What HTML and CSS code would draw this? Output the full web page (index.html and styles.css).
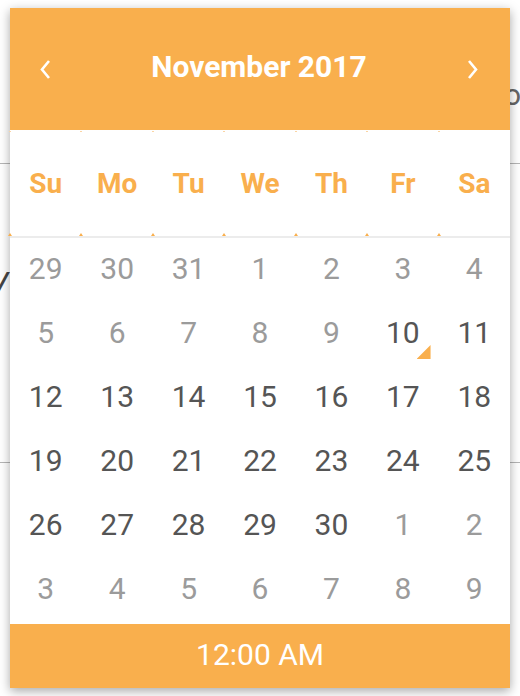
FILE: index.html
```html
<!DOCTYPE html>
<html lang="en">
<head>
    <meta charset="UTF-8">
    <title>Date Picker</title>
    <link rel="stylesheet" href="styles.css">
</head>
<body>
    <div class="page">
        <div class="page-label">Stop</div>
        <div class="page-line line-top"></div>
        <div class="page-input">/</div>
        <div class="page-line line-bottom"></div>
    </div>

    <div class="picker">
        <div class="picker-header">
            <button class="nav-btn" aria-label="Previous month">
                <svg width="14" height="20" viewBox="0 0 14 20"><polyline points="10,2 3,10.5 10,19" fill="none" stroke="#fff" stroke-width="2.6"/></svg>
            </button>
            <div class="picker-title">November 2017</div>
            <button class="nav-btn" aria-label="Next month">
                <svg width="14" height="20" viewBox="0 0 14 20"><polyline points="4,2 11,10.5 4,19" fill="none" stroke="#fff" stroke-width="2.6"/></svg>
            </button>
        </div>

        <div class="weekdays">
            <div class="weekday">Su</div>
            <div class="weekday">Mo</div>
            <div class="weekday">Tu</div>
            <div class="weekday">We</div>
            <div class="weekday">Th</div>
            <div class="weekday">Fr</div>
            <div class="weekday">Sa</div>
        </div>

        <div class="days">
            <div class="day muted">29</div>
            <div class="day muted">30</div>
            <div class="day muted">31</div>
            <div class="day muted">1</div>
            <div class="day muted">2</div>
            <div class="day muted">3</div>
            <div class="day muted">4</div>

            <div class="day muted">5</div>
            <div class="day muted">6</div>
            <div class="day muted">7</div>
            <div class="day muted">8</div>
            <div class="day muted">9</div>
            <div class="day today">10</div>
            <div class="day">11</div>

            <div class="day">12</div>
            <div class="day">13</div>
            <div class="day">14</div>
            <div class="day">15</div>
            <div class="day">16</div>
            <div class="day">17</div>
            <div class="day">18</div>

            <div class="day">19</div>
            <div class="day">20</div>
            <div class="day">21</div>
            <div class="day">22</div>
            <div class="day">23</div>
            <div class="day">24</div>
            <div class="day">25</div>

            <div class="day">26</div>
            <div class="day">27</div>
            <div class="day">28</div>
            <div class="day">29</div>
            <div class="day">30</div>
            <div class="day muted">1</div>
            <div class="day muted">2</div>

            <div class="day muted">3</div>
            <div class="day muted">4</div>
            <div class="day muted">5</div>
            <div class="day muted">6</div>
            <div class="day muted">7</div>
            <div class="day muted">8</div>
            <div class="day muted">9</div>
        </div>

        <div class="picker-footer">12:00 AM</div>
    </div>
</body>
</html>
```

FILE: styles.css
```css
html, body {
    margin: 0;
    height: 100%;
    background: #fff;
    font-family: Roboto, "Liberation Sans", sans-serif;
}

/* page underneath the popup */
.page {
    height: 100%;
    overflow: hidden;
}
.page-label {
    padding-top: 80px;
    text-align: right;
    margin-right: -18px;
    font-size: 30px;
    line-height: 30px;
    color: #666;
}
.page-line {
    height: 1px;
    background: #b5b5b5;
}
.line-top {
    margin-top: 53px;
}
.page-input {
    margin-top: 104px;
    margin-left: -8px;
    font-size: 40px;
    line-height: 40px;
    font-style: italic;
    color: #444;
}
.line-bottom {
    margin-top: 154px;
}

/* date picker popup */
.picker {
    position: absolute;
    left: 10px;
    top: 8px;
    width: 500px;
    background: #fff;
    box-shadow: 0 3px 10px rgba(0, 0, 0, 0.35);
}
.picker-header {
    height: 122px;
    background: #f9af4d;
    display: flex;
    align-items: center;
    justify-content: space-between;
    padding: 0 26px 0 24px;
    box-sizing: border-box;
}
.picker-title {
    color: #fff;
    font-weight: bold;
    font-size: 30px;
    line-height: 30px;
    margin-top: -4px;
}
.nav-btn {
    background: none;
    border: 0;
    padding: 0;
    width: 24px;
    height: 24px;
    display: flex;
    align-items: center;
    justify-content: center;
    cursor: pointer;
}

.weekdays {
    display: grid;
    grid-template-columns: repeat(7, 1fr);
    border-bottom: 2px solid #ececec;
}
.weekday {
    position: relative;
    height: 106px;
    display: flex;
    align-items: center;
    justify-content: center;
    color: #f9af4d;
    font-weight: bold;
    font-size: 28px;
}
/* little tick marks between the weekday columns */
.weekday::before {
    content: "";
    position: absolute;
    left: -2px;
    bottom: 0;
    border-left: 2px solid transparent;
    border-right: 2px solid transparent;
    border-bottom: 3px solid #f9af4d;
}
.weekday::after {
    content: "";
    position: absolute;
    left: -1px;
    top: 1px;
    width: 2px;
    height: 1px;
    background: #fbd5a4;
}

.days {
    display: grid;
    grid-template-columns: repeat(7, 1fr);
    grid-auto-rows: 64px;
    padding-bottom: 2px;
}
.day {
    position: relative;
    display: flex;
    align-items: center;
    justify-content: center;
    padding-bottom: 3px;
    font-size: 30px;
    color: #555;
}
.day.muted {
    color: #9b9b9b;
}
.day.today::after {
    content: "";
    position: absolute;
    right: 8px;
    bottom: 7px;
    width: 14px;
    height: 14px;
    background: #f9af4d;
    clip-path: polygon(100% 0, 100% 100%, 0 100%);
}

.picker-footer {
    height: 64px;
    box-sizing: border-box;
    padding-bottom: 3px;
    background: #f9af4d;
    color: #fff;
    font-size: 30px;
    display: flex;
    align-items: center;
    justify-content: center;
}
```
